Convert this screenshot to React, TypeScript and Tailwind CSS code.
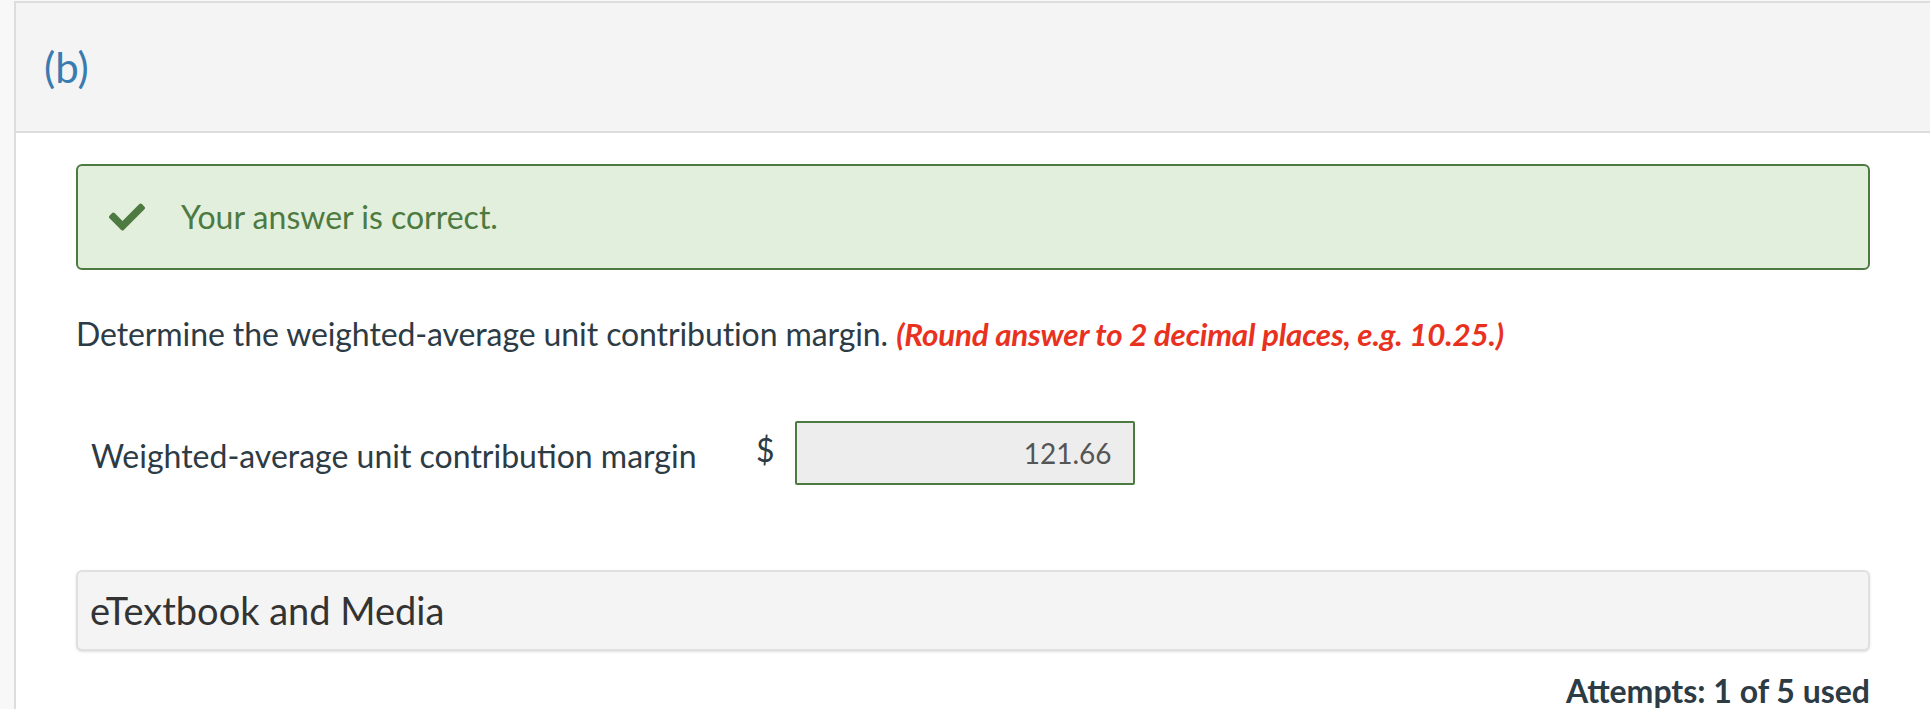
import { FaCheck } from 'react-icons/fa'

const font = { fontFamily: 'Lato, "Open Sans", "Liberation Sans", sans-serif' }

export default function App() {
  return (
    <div className="h-[709px] w-[1930px] overflow-hidden bg-[#f8f8f8] pl-[14px] pt-[1px]" style={font}>
      <div className="h-full border-l-2 border-t-2 border-[#dddddd] bg-white">
        {/* part header */}
        <div className="flex h-[130px] items-center border-b-2 border-[#dddddd] bg-[#f4f4f4] pl-[28px]">
          <span className="text-[42px] leading-none text-[#3a7bb0]">(b)</span>
        </div>

        <div className="pl-[60px] pr-[60px] pt-[31px]">
          {/* feedback */}
          <div className="flex h-[106px] items-center rounded-md border-2 border-[#4d7a41] bg-[#e2efdc] pl-[26px]">
            <FaCheck className="h-[36px] w-[46px] text-[#4d7a41]" />
            <span className="ml-[31px] text-[32px] text-[#4d7a41]">Your answer is correct.</span>
          </div>

          {/* question */}
          <p className="mt-[41px] text-[32px] leading-[46px] tracking-[-0.1px] text-[#2d3b45]">
            Determine the weighted-average unit contribution margin.{' '}
            <span className="text-[31.4px] font-bold italic tracking-[-0.2px] text-[#e8321f]">
              (Round answer to 2 decimal places, e.g. 10.25.)
            </span>
          </p>

          <div className="mt-[64px] flex items-center">
            <span className="mt-[6px] w-[680px] pl-[15px] text-[32px] text-[#2d3b45]">
              Weighted-average unit contribution margin
            </span>
            <span className="-mt-[6px] text-[32px] text-[#2d3b45]">$</span>
            <div className="ml-[20px] flex h-[64px] w-[340px] items-center justify-end rounded-[2px] border-2 border-[#4d7a41] bg-[#ededed] pr-[21px] text-[28px] text-[#555555]">
              121.66
            </div>
          </div>

          {/* resources */}
          <div className="mt-[85px] flex h-[81px] items-center rounded-md border-2 border-[#e0e0e0] bg-[#f4f4f4] pl-[12px] shadow-sm">
            <span className="text-[38px] text-[#333333]">eTextbook and Media</span>
          </div>

          <div className="mt-[20px] text-right text-[32px] font-bold leading-[40px] text-[#2d3b45]">
            Attempts: 1 of 5 used
          </div>
        </div>
      </div>
    </div>
  )
}
